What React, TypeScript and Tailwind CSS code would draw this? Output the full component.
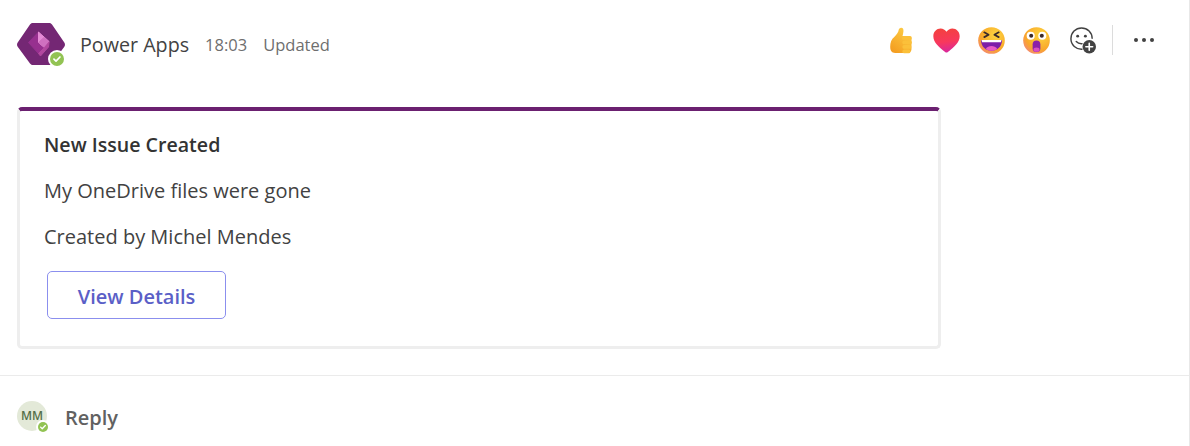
// Teams message card from Power Apps
import { useId, type ReactNode } from 'react'

const FONT = 'font-["Open_Sans","Noto_Sans",sans-serif]'

function StatusBadge({ size, ring }: { size: number; ring: number }) {
  return (
    <svg width={size + ring * 2} height={size + ring * 2} viewBox="0 0 20 20" className="block">
      <circle cx="10" cy="10" r="10" fill="#fff" />
      <circle cx="10" cy="10" r={10 * (size / (size + ring * 2))} fill="#92c353" />
      <path d="M6.6 10.2l2.3 2.2 4.4-4.6" fill="none" stroke="#fff" strokeWidth="1.9" strokeLinecap="round" strokeLinejoin="round" />
    </svg>
  )
}

function PowerAppsLogo() {
  return (
    <svg width="48" height="42" viewBox="0 0 48 42" className="block">
      <path d="M13 1.5C13.6.6 14.6 0 15.700 0h16.600c1.100 0 2.100.6 2.700 1.500l12.300 18c.9 1.300.9 3 0 4.200L35 40.500c-.6.9-1.600 1.500-2.700 1.500H15.700c-1.100 0-2.100-.6-2.700-1.500L.7 23.700c-.9-1.200-.9-2.900 0-4.200z" fill="#742774" />
      <g strokeLinejoin="round" strokeWidth="1">
        <path d="M21.500 9L11.500 19.500l10 11 6-6-6-5z" fill="#97308f" stroke="#97308f" />
        <path d="M21.500 9L32 18.500 27.500 24.500 21.500 19.500z" fill="#e58bd6" stroke="#e58bd6" />
        <path d="M27 14.500l5 4.500-4.500 5.500-6-5z" fill="#cf70c0" stroke="#cf70c0" />
        <path d="M21.500 30.500l6-6 4.500-5.500-.5 5-8 9z" fill="#b2489f" stroke="#b2489f" />
      </g>
    </svg>
  )
}

function ThumbEmoji() {
  const id = useId()
  return (
    <svg width="24" height="27" viewBox="0 0 26 30" className="block">
      <defs>
        <linearGradient id={id} x1="0.75" y1="0" x2="0.1" y2="1">
          <stop offset="0" stopColor="#fdcd45" />
          <stop offset="1" stopColor="#f39a1e" />
        </linearGradient>
      </defs>
      <path d="M12.500 1c2.500-.5 3.500 1.500 3.200 4-.2 2-.7 3.500-1 5h7c2 0 3 1.500 3 3.500v11c0 2.500-1.500 4.500-4.500 4.500H8c-4 0-7-1-7-7 0-5 1.500-8.500 4.500-11 2.500-2.500 4.500-5 5-8 .1-1 .7-1.800 2-2z" fill={`url(#${id})`} />
      <g fill="#fbc03a">
        <rect x="14" y="10" width="11" height="4.300" rx="2.100" />
        <rect x="14.500" y="15" width="10.500" height="4.300" rx="2.100" />
        <rect x="14.500" y="20" width="10" height="4.300" rx="2.100" />
        <rect x="14.500" y="25" width="9" height="4.300" rx="2.100" />
      </g>
    </svg>
  )
}

function HeartEmoji() {
  const id = useId()
  return (
    <svg width="27" height="25" viewBox="0 0 28 26" className="block">
      <defs>
        <linearGradient id={id} x1="0.4" y1="0" x2="0.55" y2="1">
          <stop offset="0" stopColor="#f3413f" />
          <stop offset="0.55" stopColor="#f8385c" />
          <stop offset="1" stopColor="#d8279e" />
        </linearGradient>
      </defs>
      <path d="M14 25.500c-1 0-1.800-.7-2.800-1.600C6.500 19.800.3 15 .3 8.500.3 3.800 3.800.5 7.800.5c2.700 0 4.800 1.300 6.200 3.500C15.400 1.800 17.500.5 20.200.5c4 0 7.500 3.300 7.500 8 0 6.500-6.200 11.300-10.900 15.400-1 .9-1.800 1.600-2.800 1.600z" fill={`url(#${id})`} />
    </svg>
  )
}

function FaceBase({ children }: { children: ReactNode }) {
  const id = useId()
  return (
    <svg width="27" height="27" viewBox="0 0 28 28" className="block">
      <defs>
        <radialGradient id={id} cx="0.65" cy="0.3" r="0.85">
          <stop offset="0" stopColor="#fdd640" />
          <stop offset="0.65" stopColor="#f9a72a" />
          <stop offset="1" stopColor="#f2808a" />
        </radialGradient>
      </defs>
      <circle cx="14" cy="14" r="13.800" fill={`url(#${id})`} />
      {children}
    </svg>
  )
}

function LaughEmoji() {
  return (
    <FaceBase>
      <path d="M6.500 5.500l4.500 2.500-4.500 2.500M21.500 5.500L17 8l4.500 2.500" fill="none" stroke="#3b2a2a" strokeWidth="1.800" strokeLinecap="round" strokeLinejoin="round" />
      <path d="M3.800 13.500h20.400c.5 0 .8.400.7.900C24.300 20.500 20 24.500 14 24.500S3.700 20.500 3.100 14.400c-.1-.5.200-.9.700-.9z" fill="#7d1ea8" />
      <path d="M3.600 13.500h20.800l-.6 2.400H4.200z" fill="#fff" />
      <path d="M8 22.700c1.500-2 3.500-3 6-3s4.500 1 6 3c-1.700 1.200-3.700 1.800-6 1.800s-4.300-.6-6-1.800z" fill="#e85bc4" />
    </FaceBase>
  )
}

function WowEmoji() {
  return (
    <FaceBase>
      <circle cx="8" cy="9" r="4.200" fill="#fff" />
      <circle cx="20" cy="9" r="4.200" fill="#fff" />
      <circle cx="8.500" cy="9" r="2.100" fill="#3b2a2a" />
      <circle cx="19.500" cy="9" r="2.100" fill="#3b2a2a" />
      <rect x="10" y="14" width="8" height="12" rx="4" fill="#8b1fa8" />
      <ellipse cx="14" cy="23.500" rx="3.200" ry="2.200" fill="#d94fc0" />
    </FaceBase>
  )
}

function AddReaction() {
  return (
    <svg width="27" height="28" viewBox="0 0 28 28" className="block">
      <path d="M13.500 23.500C7.500 23.800 2 19.300 2 12.800 2 6.500 6.800 1.500 13 1.500s11 4.700 11 10.800" fill="none" stroke="#424242" strokeWidth="1.500" strokeLinecap="round" />
      <circle cx="9" cy="10" r="1.500" fill="#424242" />
      <circle cx="17" cy="10" r="1.500" fill="#424242" />
      <path d="M7.500 15.500c1.500 1.700 3.500 2.500 6 2.300" fill="none" stroke="#424242" strokeWidth="1.500" strokeLinecap="round" />
      <circle cx="21" cy="21" r="7" fill="#424242" />
      <path d="M21 17.500v7M17.500 21h7" stroke="#fff" strokeWidth="1.700" strokeLinecap="round" />
    </svg>
  )
}

export default function App() {
  return (
    <div className={`${FONT} w-[1190px] h-[446px] bg-white border-r border-[#e8e8e8] overflow-hidden`}>
      <div className="h-[375px] border-b border-[#ebebeb] box-content">
        {/* 헤더 */}
        <div className="flex items-center pt-[23px] pl-[17px] pr-[35px] h-[65px]">
          <div className="relative w-[48px] h-[42px]">
            <PowerAppsLogo />
            <div className="absolute left-[31px] top-[27px]">
              <StatusBadge size={14} ring={2} />
            </div>
          </div>
          <span className="ml-[15px] mt-[2px] text-[19.700px] leading-[28px] text-[#424242]">Power Apps</span>
          <span className="ml-[16px] mt-[2px] text-[16.500px] leading-[28px] text-[#6e6e6e]">18:03</span>
          <span className="ml-[16px] mt-[2px] text-[16.500px] leading-[28px] text-[#6e6e6e]">Updated</span>
          <div className="ml-auto mb-[8px] flex items-center">
            <ThumbEmoji />
            <div className="ml-[20px]"><HeartEmoji /></div>
            <div className="ml-[18px]"><LaughEmoji /></div>
            <div className="ml-[18px]"><WowEmoji /></div>
            <div className="ml-[19px]"><AddReaction /></div>
            <div className="ml-[16px] w-px h-[30px] bg-[#dcdcdc]" />
            <div className="ml-[21px] w-[20px] flex justify-between">
              <span className="w-[4px] h-[4px] rounded-full bg-[#424242]" />
              <span className="w-[4px] h-[4px] rounded-full bg-[#424242]" />
              <span className="w-[4px] h-[4px] rounded-full bg-[#424242]" />
            </div>
          </div>
        </div>

        {/* 카드 */}
        <div className="ml-[17px] mt-[42px] w-[924px] h-[242px] rounded-[5px] border-[3px] border-[#eeeeee] border-t-4 border-t-[#6b2070] pl-[24px] pt-[20px]">
          <p className="text-[19.600px] leading-[28px] font-semibold text-[#333]">New Issue Created</p>
          <p className="mt-[18px] text-[20px] leading-[28px] text-[#424242]">My OneDrive files were gone</p>
          <p className="mt-[18px] text-[20px] leading-[28px] text-[#424242]">Created by Michel Mendes</p>
          <button
            type="button"
            className="mt-[20px] ml-[3px] pt-[3px] w-[179px] h-[48px] rounded-[5px] border border-[#8b8fee] text-[20px] font-semibold text-[#5b5fc7]"
          >
            View Details
          </button>
        </div>
      </div>

      {/* 답글 */}
      <div className="flex items-start pl-[17px] pt-[25px]">
        <div className="relative w-[30px] h-[30px] rounded-full bg-[#e3e9d8] flex items-center justify-center">
          <span className="text-[12px] font-semibold text-[#55704a] leading-none">MM</span>
          <div className="absolute left-[19px] top-[19px]">
            <StatusBadge size={10} ring={2} />
          </div>
        </div>
        <span className="ml-[18px] mt-[3px] text-[20px] leading-[28px] font-semibold text-[#616161]">Reply</span>
      </div>
    </div>
  )
}
